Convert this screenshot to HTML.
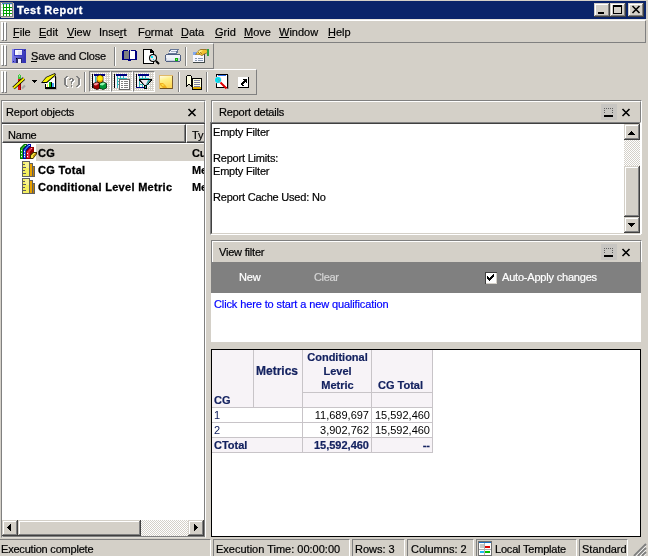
<!DOCTYPE html>
<html><head><meta charset="utf-8">
<style>
*{margin:0;padding:0;box-sizing:border-box}
html,body{width:648px;height:556px;overflow:hidden;background:#D4D0C8;font-family:"Liberation Sans",sans-serif;font-size:11px;color:#000}
body{position:relative}
.a{position:absolute}
.t{position:absolute;white-space:nowrap;line-height:12px;letter-spacing:-0.2px;will-change:transform;-webkit-text-stroke:0.2px currentColor}
.ls0{letter-spacing:0}
.ns{-webkit-text-stroke:0}
.lsb{letter-spacing:0.3px;-webkit-text-stroke:0.3px #000}
.b{font-weight:bold}
.u{position:absolute;height:1px;background:#000}
.grip{position:absolute;width:3px;border-left:1px solid #fff;border-top:1px solid #fff;border-right:1px solid #808080;border-bottom:1px solid #808080;background:#fff}
.grip::after{content:"";position:absolute;left:0;top:0;right:0;bottom:0;}
.sep{position:absolute;width:2px;border-left:1px solid #808080;border-right:1px solid #fff}
.btn3d{position:absolute;background:#D4D0C8;box-shadow:inset -1px -1px #404040,inset 1px 1px #D4D0C8,inset -2px -2px #808080,inset 2px 2px #fff}
.etch{position:absolute;border-top:1px solid #808080;border-left:1px solid #808080;border-right:1px solid #fff;border-bottom:1px solid #fff}
.etch>div{position:absolute;left:0;top:0;right:0;bottom:0;border-top:1px solid #fff;border-left:1px solid #fff;border-right:1px solid #808080;border-bottom:1px solid #808080}
.dith{background:repeating-conic-gradient(#fff 0 25%,#D4D0C8 0 50%) 0 0/2px 2px}
.dots{background:linear-gradient(90deg,transparent 1px,#D4D0C8 1px) 1px 1px/2px 2px,linear-gradient(transparent 1px,#D4D0C8 1px) 1px 1px/2px 2px,#fff}
.pressed{position:absolute;border-top:1px solid #808080;border-left:1px solid #808080;border-right:1px solid #fff;border-bottom:1px solid #fff}
.pane{position:absolute;top:539px;height:17px;border-top:1px solid #808080;border-left:1px solid #808080;border-right:1px solid #fff}
svg{position:absolute;overflow:visible}
.gc{position:absolute;background:#F7F3F7;border-right:1px solid #C8C4C8;border-bottom:1px solid #C8C4C8}
.gw{position:absolute;background:#fff;border-right:1px solid #C8C4C8;border-bottom:1px solid #C8C4C8}
.nv{color:#142260}
</style></head><body>
<!-- ============ title bar ============ -->
<div class="a" style="left:0;top:1px;width:646px;height:18px;background:#0A246A"></div>
<svg style="left:0;top:0" width="14" height="18" viewBox="0 0 14 18" shape-rendering="crispEdges"><rect x="13" y="3" width="1" height="15" fill="#C8C4BC"/><rect x="1" y="17" width="13" height="1" fill="#C8C4BC"/><rect x="0" y="2" width="13" height="15" fill="#808080"/><rect x="1" y="3" width="11" height="13" fill="#D8D8E0"/><rect x="2" y="3" width="10" height="1" fill="#3A7EC0"/><rect x="1" y="3" width="1" height="1" fill="#fff"/><rect x="1" y="5" width="2" height="2" fill="#fff"/><rect x="1" y="8" width="2" height="2" fill="#fff"/><rect x="1" y="11" width="2" height="2" fill="#fff"/><rect x="1" y="14" width="2" height="2" fill="#fff"/><rect x="4" y="5" width="2" height="2" fill="#fff"/><rect x="4" y="8" width="2" height="2" fill="#fff"/><rect x="4" y="11" width="2" height="2" fill="#fff"/><rect x="4" y="14" width="2" height="2" fill="#fff"/><rect x="7" y="5" width="2" height="2" fill="#fff"/><rect x="7" y="8" width="2" height="2" fill="#fff"/><rect x="7" y="11" width="2" height="2" fill="#fff"/><rect x="7" y="14" width="2" height="2" fill="#fff"/><rect x="10" y="5" width="2" height="2" fill="#fff"/><rect x="10" y="8" width="2" height="2" fill="#fff"/><rect x="10" y="11" width="2" height="2" fill="#fff"/><rect x="10" y="14" width="2" height="2" fill="#fff"/><rect x="3" y="4" width="1" height="12" fill="#00A000"/><rect x="6" y="4" width="1" height="12" fill="#00A000"/><rect x="9" y="4" width="1" height="12" fill="#00A000"/><rect x="3" y="7" width="9" height="1" fill="#00A000"/><rect x="3" y="10" width="9" height="1" fill="#00A000"/><rect x="3" y="13" width="9" height="1" fill="#00A000"/></svg>
<div class="t b" style="left:17px;top:4px;color:#fff;letter-spacing:0.5px;-webkit-text-stroke:0.3px #fff">Test Report</div>
<div class="btn3d" style="left:594px;top:3px;width:16px;height:14px"></div>
<div class="a" style="left:598px;top:12px;width:6px;height:2px;background:#000"></div>
<div class="btn3d" style="left:610px;top:3px;width:16px;height:14px"></div>
<div class="a" style="left:613px;top:5px;width:9px;height:9px;border:1px solid #000;border-top-width:2px"></div>
<div class="btn3d" style="left:628px;top:3px;width:16px;height:14px"></div>
<svg style="left:632px;top:6px" width="8" height="7" viewBox="0 0 8 7"><path d="M0.5 0 L7.5 7 M7.5 0 L0.5 7" stroke="#000" stroke-width="1.6"/></svg>
<div class="a" style="left:0;top:19px;width:648px;height:1px;background:#E8E6E0"></div>
<div class="a" style="left:0;top:20px;width:645px;height:1px;background:#fff"></div>

<!-- ============ menu bar ============ -->
<div class="a" style="left:0;top:21px;width:646px;height:22px;border-right:1px solid #808080;border-bottom:1px solid #808080"></div>
<div class="grip" style="left:1px;top:22px;height:19px"></div>
<div class="grip" style="left:4px;top:22px;height:19px"></div>
<div class="t ls0" style="left:13px;top:26px">File</div><div class="u" style="left:13px;top:37px;width:6px"></div>
<div class="t ls0" style="left:39px;top:26px">Edit</div><div class="u" style="left:39px;top:37px;width:7px"></div>
<div class="t ls0" style="left:67px;top:26px">View</div><div class="u" style="left:67px;top:37px;width:7px"></div>
<div class="t ls0" style="left:99px;top:26px">Insert</div><div class="u" style="left:119px;top:37px;width:4px"></div>
<div class="t ls0" style="left:138px;top:26px">Format</div><div class="u" style="left:145px;top:37px;width:6px"></div>
<div class="t ls0" style="left:181px;top:26px">Data</div><div class="u" style="left:181px;top:37px;width:7px"></div>
<div class="t ls0" style="left:215px;top:26px">Grid</div><div class="u" style="left:215px;top:37px;width:7px"></div>
<div class="t ls0" style="left:244px;top:26px">Move</div><div class="u" style="left:244px;top:37px;width:9px"></div>
<div class="t ls0" style="left:279px;top:26px">Window</div><div class="u" style="left:279px;top:37px;width:10px"></div>
<div class="t ls0" style="left:328px;top:26px">Help</div><div class="u" style="left:328px;top:37px;width:7px"></div>

<!-- ============ toolbar 1 ============ -->
<div class="a" style="left:0;top:43px;width:214px;height:26px;border-top:1px solid #fff;border-right:1px solid #808080;border-bottom:1px solid #808080"></div>
<div class="grip" style="left:1px;top:45px;height:21px"></div>
<div class="grip" style="left:4px;top:45px;height:21px"></div>
<!-- floppy -->
<svg style="left:12px;top:49px" width="14" height="14" viewBox="0 0 14 14" shape-rendering="crispEdges">
  <defs><linearGradient id="fl" x1="0" y1="0" x2="1" y2="0.3"><stop offset="0" stop-color="#8C8CF4"/><stop offset="1" stop-color="#3434B4"/></linearGradient></defs>
  <rect x="0" y="0" width="14" height="14" fill="url(#fl)"/>
  <rect x="2" y="0" width="9" height="7" fill="#3C3CC0"/>
  <rect x="3" y="1" width="7" height="5" fill="#F8F8FF"/>
  <rect x="6" y="2" width="4" height="4" fill="#E0E0F4"/>
  <rect x="12" y="1" width="1" height="1" fill="#202060"/>
  <rect x="4" y="9" width="6" height="5" fill="#2A2A70"/>
  <rect x="6" y="10" width="3" height="4" fill="#F0F0FF"/>
  <rect x="4" y="9" width="1" height="1" fill="#000"/>
  <rect x="1" y="12" width="1" height="1" fill="#202080"/>
</svg>
<div class="t" style="left:31px;top:50px">Save and Close</div><div class="u" style="left:31px;top:61px;width:6px"></div>
<div class="sep" style="left:114px;top:47px;height:19px"></div>
<!-- book -->
<svg style="left:122px;top:50px" width="15" height="12" viewBox="0 0 15 12" shape-rendering="crispEdges">
  <path d="M1 0H6V1H7V0H8V1H9V0H14V1H15V10H9V11H6V10H0V1H1Z" fill="#000080"/>
  <rect x="2" y="1" width="5" height="8" fill="#808080"/>
  <rect x="8" y="1" width="5" height="8" fill="#fff"/>
  <rect x="7" y="1" width="1" height="9" fill="#000080"/>
</svg>
<!-- print preview -->
<svg style="left:143px;top:49px" width="17" height="16" viewBox="0 0 17 16" shape-rendering="crispEdges">
  <path d="M0 0H8L11 3V15H0Z" fill="#000"/>
  <path d="M1 1H7V4H10V14H1Z" fill="#fff"/>
  <circle cx="10" cy="9" r="4" fill="#000" shape-rendering="auto"/>
  <circle cx="10" cy="9" r="3" fill="#E8E8E8" shape-rendering="auto"/>
  <rect x="8" y="7" width="2" height="2" fill="#00E8F8"/>
  <rect x="10" y="10" width="1" height="1" fill="#00E8F8"/>
  <path d="M13 12L16 15" stroke="#000" stroke-width="2" shape-rendering="auto"/>
</svg>
<!-- printer -->
<svg style="left:165px;top:49px" width="16" height="14" viewBox="0 0 16 14" shape-rendering="crispEdges">
  <path d="M5 0H14L12 5H3Z" fill="#687898"/>
  <path d="M6 1H12L11 4H4Z" fill="#F4F4FC"/>
  <rect x="6" y="2" width="5" height="1" fill="#A8B0C8"/>
  <path d="M1 5H15V6H16V12H15V13H1V12H0V6H1Z" fill="#4E5E80"/>
  <rect x="1" y="6" width="14" height="3" fill="#F0F2F8"/>
  <rect x="1" y="9" width="14" height="3" fill="#C8D0E0"/>
  <rect x="2" y="9" width="8" height="2" fill="#E8ECF4"/>
  <rect x="10" y="9" width="3" height="3" fill="#10B010"/>
  <rect x="11" y="10" width="1" height="1" fill="#80F080"/>
</svg>
<div class="sep" style="left:185px;top:47px;height:19px"></div>
<!-- form/hand -->
<svg style="left:190px;top:46px" width="22" height="20" viewBox="0 0 22 20" shape-rendering="crispEdges">
  <rect x="3" y="6" width="12" height="11" fill="#404848"/>
  <rect x="3" y="6" width="11" height="10" fill="#F8F8FF"/>
  <rect x="3" y="6" width="4" height="3" fill="#80A8F0"/>
  <rect x="5" y="12" width="2" height="1" fill="#8898B0"/><rect x="8" y="12" width="5" height="1" fill="#8898B0"/>
  <rect x="5" y="14" width="2" height="1" fill="#8898B0"/><rect x="8" y="14" width="5" height="1" fill="#8898B0"/>
  <path d="M5 8.5 L9 4 L11 3 H16 L17.5 4 V7 L14 8.5 L12 10 L10 9 Z" fill="#806020" shape-rendering="auto"/>
  <path d="M5.8 8.3 L9.3 4.5 L11 3.7 H15.8 L17 4.5 V6.5 L13.5 8 L11.8 9.2 L10 8.4 Z" fill="#F0C030" shape-rendering="auto"/>
  <path d="M7 7 L9.5 4.5 L13 4 L10 7 Z" fill="#FFF080" shape-rendering="auto"/>
  <rect x="8" y="6" width="1" height="1" fill="#A08030"/><rect x="10" y="6" width="1" height="1" fill="#A08030"/><rect x="9" y="7" width="1" height="1" fill="#A08030"/><rect x="11" y="7" width="1" height="1" fill="#A08030"/>
  <rect x="17" y="3" width="2" height="7" fill="#30A040"/>
</svg>

<!-- ============ toolbar 2 ============ -->
<div class="a" style="left:0;top:69px;width:257px;height:26px;border-top:1px solid #fff;border-right:1px solid #808080;border-bottom:1px solid #808080"></div>
<div class="grip" style="left:1px;top:71px;height:22px"></div>
<div class="grip" style="left:4px;top:71px;height:22px"></div>
<!-- pencil/candle -->
<svg style="left:12px;top:74px" width="14" height="16" viewBox="0 0 14 16" shape-rendering="crispEdges">
  <path d="M10 14.5 L13 11.5" stroke="#A8A8A8" stroke-width="2.2" shape-rendering="auto"/>
  <rect x="7" y="0" width="1" height="1" fill="#50D050"/>
  <rect x="6" y="1" width="3" height="4" fill="#40C040"/>
  <rect x="7" y="1" width="1" height="2" fill="#A0F0A0"/>
  <rect x="6" y="5" width="3" height="11" fill="#E01010"/>
  <rect x="8" y="5" width="1" height="11" fill="#A00000"/>
  <path d="M1.5 14 L12 4.5" stroke="#000" stroke-width="3.4" shape-rendering="auto"/>
  <path d="M1.5 14 L12 4.5" stroke="#F8F000" stroke-width="1.8" shape-rendering="auto"/>
</svg>
<svg style="left:32px;top:80px" width="5" height="3" viewBox="0 0 5 3" shape-rendering="crispEdges"><path d="M0 0H5V1H4V2H3V3H2V2H1V1H0Z" fill="#000"/></svg>
<!-- chart with lightning -->
<svg style="left:39px;top:71px" width="20" height="20" viewBox="0 0 20 20" shape-rendering="crispEdges">
  <rect x="6" y="7" width="11" height="11" fill="#fff"/>
  <rect x="16" y="5" width="1" height="13" fill="#000"/>
  <rect x="6" y="16" width="11" height="2" fill="#000"/>
  <rect x="17" y="6" width="1" height="13" fill="#B0ACA4"/>
  <rect x="7" y="18" width="11" height="1" fill="#B0ACA4"/>
  <rect x="6" y="13" width="1" height="3" fill="#000"/>
  <rect x="8" y="13" width="1" height="3" fill="#F0F040"/>
  <rect x="10" y="11" width="2" height="5" fill="#00C000"/>
  <rect x="12" y="11" width="1" height="5" fill="#000"/>
  <rect x="13" y="12" width="2" height="4" fill="#40A8F8"/>
  <path d="M2 12 L7 6 L16 2 L17 4 L8 12 Z" fill="#000" shape-rendering="auto"/>
  <path d="M3.5 11 L7.5 6.5 L15.5 3 L15.8 4 L7.5 11 Z" fill="#F8F400" shape-rendering="auto"/>
</svg>
<!-- (?) disabled -->
<svg style="left:63px;top:75px" width="19" height="14" viewBox="0 0 19 14" shape-rendering="crispEdges"><rect x="4" y="2" width="2" height="1" fill="#fff"/><rect x="3" y="3" width="2" height="1" fill="#fff"/><rect x="2" y="4" width="2" height="7" fill="#fff"/><rect x="3" y="11" width="2" height="1" fill="#fff"/><rect x="4" y="12" width="2" height="1" fill="#fff"/><rect x="14" y="2" width="2" height="1" fill="#fff"/><rect x="15" y="3" width="2" height="1" fill="#fff"/><rect x="16" y="4" width="2" height="7" fill="#fff"/><rect x="15" y="11" width="2" height="1" fill="#fff"/><rect x="14" y="12" width="2" height="1" fill="#fff"/><rect x="8" y="4" width="3" height="1" fill="#fff"/><rect x="7" y="5" width="2" height="1" fill="#fff"/><rect x="10" y="5" width="2" height="2" fill="#fff"/><rect x="9" y="7" width="2" height="1" fill="#fff"/><rect x="9" y="8" width="1" height="2" fill="#fff"/><rect x="9" y="11" width="1" height="2" fill="#fff"/><rect x="3" y="1" width="2" height="1" fill="#808080"/><rect x="2" y="2" width="2" height="1" fill="#808080"/><rect x="1" y="3" width="2" height="7" fill="#808080"/><rect x="2" y="10" width="2" height="1" fill="#808080"/><rect x="3" y="11" width="2" height="1" fill="#808080"/><rect x="13" y="1" width="2" height="1" fill="#808080"/><rect x="14" y="2" width="2" height="1" fill="#808080"/><rect x="15" y="3" width="2" height="7" fill="#808080"/><rect x="14" y="10" width="2" height="1" fill="#808080"/><rect x="13" y="11" width="2" height="1" fill="#808080"/><rect x="7" y="3" width="3" height="1" fill="#808080"/><rect x="6" y="4" width="2" height="1" fill="#808080"/><rect x="9" y="4" width="2" height="2" fill="#808080"/><rect x="8" y="6" width="2" height="1" fill="#808080"/><rect x="8" y="7" width="1" height="2" fill="#808080"/><rect x="8" y="10" width="1" height="2" fill="#808080"/></svg>
<div class="sep" style="left:84px;top:72px;height:20px"></div>
<!-- pressed buttons -->
<div class="pressed dots" style="left:89px;top:71px;width:22px;height:21px"></div>
<div class="pressed dots" style="left:111px;top:71px;width:22px;height:21px"></div>
<div class="pressed dots" style="left:133px;top:71px;width:22px;height:21px"></div>
<!-- cubes -->
<svg style="left:88px;top:70px" width="22" height="22" viewBox="0 0 22 22">
  <rect x="4" y="4" width="1" height="14" fill="#000"/>
  <rect x="6" y="4" width="11" height="2" fill="#000080"/>
  <rect x="5" y="6" width="12" height="11" fill="#F4F0F8"/>
  <rect x="7" y="6" width="1" height="11" fill="#30B8B8"/>
  <rect x="14" y="6" width="1" height="11" fill="#30B8B8"/>
  <path d="M9 6.5 L12 5 L15 6.5 V12 L12 13.5 L9 12 Z" fill="#E89000" stroke="#303000" stroke-width="0.8"/>
  <path d="M9.4 6.8 L12 5.5 L14.6 6.8 V10 L12 11 L9.4 10 Z" fill="#FFE800"/>
  <path d="M5.5 13.5 L9 12 L12.5 13.5 V18 L9 19.5 L5.5 18 Z" fill="#A00000" stroke="#200000" stroke-width="0.8"/>
  <path d="M6 13.8 L9 12.5 L11 13.5 L8 15.5 L6 15 Z" fill="#F89098"/>
  <path d="M11.5 13.5 L15 12 L18.5 13.5 V18 L15 19.5 L11.5 18 Z" fill="#009838" stroke="#002000" stroke-width="0.8"/>
  <path d="M12 13.8 L15 12.5 L17.5 13.5 L14.5 15.5 L12 15 Z" fill="#90F8B0"/>
</svg>
<!-- grid + doc -->
<svg style="left:110px;top:70px" width="22" height="22" viewBox="0 0 22 22" shape-rendering="crispEdges">
  <rect x="4" y="4" width="1" height="14" fill="#000"/>
  <rect x="6" y="4" width="11" height="2" fill="#000080"/>
  <rect x="5" y="6" width="12" height="12" fill="#F4F0F8"/>
  <rect x="7" y="6" width="1" height="12" fill="#30B8B8"/>
  <rect x="10" y="6" width="1" height="12" fill="#30B8B8"/>
  <rect x="13" y="6" width="1" height="12" fill="#30B8B8"/>
  <rect x="8" y="8" width="9" height="1" fill="#30B8B8"/>
  <rect x="8" y="11" width="9" height="1" fill="#30B8B8"/>
  <rect x="8" y="14" width="9" height="1" fill="#30B8B8"/>
  <rect x="9" y="9" width="11" height="11" fill="#686868"/>
  <rect x="10" y="10" width="9" height="9" fill="#fff"/>
  <rect x="11" y="11" width="2" height="1" fill="#808080"/><rect x="14" y="11" width="4" height="1" fill="#808080"/>
  <rect x="11" y="13" width="2" height="1" fill="#808080"/><rect x="14" y="13" width="4" height="1" fill="#808080"/>
  <rect x="11" y="15" width="2" height="1" fill="#808080"/><rect x="14" y="15" width="4" height="1" fill="#808080"/>
  <rect x="11" y="17" width="2" height="1" fill="#808080"/><rect x="14" y="17" width="4" height="1" fill="#808080"/>
</svg>
<!-- grid + funnel -->
<svg style="left:132px;top:70px" width="22" height="22" viewBox="0 0 22 22" shape-rendering="crispEdges">
  <rect x="4" y="4" width="1" height="14" fill="#000"/>
  <rect x="6" y="4" width="11" height="2" fill="#000080"/>
  <rect x="5" y="6" width="12" height="11" fill="#F4F0F8"/>
  <rect x="7" y="6" width="1" height="11" fill="#30B8B8"/>
  <rect x="10" y="6" width="1" height="11" fill="#30B8B8"/>
  <rect x="13" y="6" width="1" height="11" fill="#30B8B8"/>
  <rect x="8" y="8" width="9" height="1" fill="#30B8B8"/>
  <rect x="8" y="11" width="9" height="1" fill="#30B8B8"/>
  <rect x="8" y="14" width="9" height="1" fill="#30B8B8"/>
  <rect x="4" y="17" width="8" height="1" fill="#000080"/>
  <path d="M7 9H20V10L15 16V19H12V16L7 10Z" fill="#000"/>
  <path d="M8.5 10H18.5L14.5 15H12.5Z" fill="#F0E8F0" shape-rendering="auto"/>
  <path d="M16 10H18.5L14.5 15H13.8Z" fill="#30A8A8" shape-rendering="auto"/>
  <rect x="13" y="16" width="1" height="2" fill="#30B0B0"/>
</svg>
<!-- sticky note -->
<svg style="left:159px;top:75px" width="14" height="14" viewBox="0 0 14 14" shape-rendering="crispEdges">
  <defs><linearGradient id="gy" x1="0" y1="0" x2="0.3" y2="1"><stop offset="0" stop-color="#FFFCE8"/><stop offset="0.4" stop-color="#FFF088"/><stop offset="1" stop-color="#FFD858"/></linearGradient></defs>
  <rect x="0" y="0" width="14" height="14" fill="#E0B868"/>
  <rect x="1" y="13" width="13" height="1" fill="#705020"/>
  <rect x="13" y="1" width="1" height="13" fill="#806030"/>
  <rect x="1" y="1" width="12" height="12" fill="url(#gy)"/>
  <path d="M1 8 L4 8 L7 11 L8 13 L4 13 L1 10 Z" fill="#F0B020" shape-rendering="auto"/>
  <path d="M2 9 L4 9 L5.5 10.5 L3.5 11 Z" fill="#FFE040" shape-rendering="auto"/>
</svg>
<div class="sep" style="left:178px;top:72px;height:20px"></div>
<!-- doc-book -->
<svg style="left:186px;top:75px" width="16" height="15" viewBox="0 0 16 15" shape-rendering="crispEdges">
  <path d="M1 0H5V1H6V12H5V11H4V10H2V11H1V12H0V1H1Z" fill="#000"/>
  <path d="M1 1H5V10H4V9H2V10H1Z" fill="#FFFFE0"/>
  <rect x="6" y="3" width="10" height="12" fill="#000"/>
  <rect x="7" y="4" width="8" height="10" fill="#FFFFE0"/>
  <rect x="8" y="5" width="6" height="1" fill="#8080A0"/>
  <rect x="8" y="7" width="6" height="1" fill="#8080A0"/>
  <rect x="8" y="9" width="6" height="1" fill="#8080A0"/>
  <rect x="8" y="11" width="6" height="1" fill="#8080A0"/>
  <rect x="7" y="12" width="8" height="2" fill="#D8A800"/>
</svg>
<div class="sep" style="left:206px;top:72px;height:20px"></div>
<!-- doc + magnifier red -->
<svg style="left:214px;top:74px" width="15" height="16" viewBox="0 0 15 16" shape-rendering="crispEdges">
  <rect x="2" y="0" width="12" height="14" fill="#000"/>
  <rect x="3" y="1" width="10" height="12" fill="#fff"/>
  <rect x="4" y="1" width="8" height="1" fill="#3070F0"/>
  <rect x="14" y="1" width="1" height="14" fill="#A0A0A0"/>
  <circle cx="4" cy="6" r="3.6" fill="#F0D0E0" shape-rendering="auto"/>
  <circle cx="4" cy="6" r="3" fill="#00E0F0" shape-rendering="auto"/>
  <rect x="4" y="5" width="1" height="1" fill="#60A0B0"/><rect x="5" y="6" width="1" height="1" fill="#60A0B0"/><rect x="4" y="7" width="1" height="1" fill="#60A0B0"/>
  <path d="M6.5 8.5 L12.5 14.5" stroke="#E00000" stroke-width="2" shape-rendering="auto"/>
  <rect x="13" y="14" width="1" height="1" fill="#606060"/>
</svg>
<!-- shortcut -->
<svg style="left:238px;top:77px" width="12" height="12" viewBox="0 0 12 12" shape-rendering="crispEdges">
  <rect x="0" y="0" width="11" height="11" fill="#000"/>
  <rect x="0" y="0" width="10" height="10" fill="#fff"/>
  <path d="M4 5H5V4H6V3H5V2H9V6H8V5H7V6H6V7H5V8H6V9H4V8H3V6H4Z" fill="#000"/>
</svg>

<!-- ============ left panel ============ -->
<div class="etch" style="left:1px;top:100px;width:205px;height:438px;border-bottom-color:#E2E0DA"><div></div></div>
<div class="t" style="left:6px;top:106px">Report objects</div>
<svg style="left:188px;top:109px" width="8" height="7" viewBox="0 0 8 7"><path d="M0.5 0 L7.5 7 M7.5 0 L0.5 7" stroke="#000" stroke-width="1.6"/></svg>
<div class="a" style="left:2px;top:122px;width:203px;height:1px;background:#808080"></div>
<div class="a" style="left:2px;top:123px;width:203px;height:1px;background:#404040"></div>
<div class="a" style="left:2px;top:124px;width:202px;height:411px;background:#fff"></div>
<!-- column header -->
<div class="a" style="left:2px;top:124px;width:184px;height:19px;background:#D4D0C8;border-top:1px solid #fff;border-left:1px solid #fff;border-right:1px solid #404040;border-bottom:1px solid #404040;box-shadow:inset -1px -1px #808080"></div>
<div class="a" style="left:186px;top:124px;width:18px;height:19px;background:#D4D0C8;border-top:1px solid #fff;border-left:1px solid #fff;border-bottom:1px solid #404040;box-shadow:inset 0 -1px #808080"></div>
<div class="t" style="left:8px;top:129px">Name</div>
<div class="t" style="left:192px;top:129px;width:12px;overflow:hidden">Ty</div>
<!-- rows -->
<div class="a" style="left:36px;top:144px;width:168px;height:17px;background:#D4D0C8"></div>
<svg style="left:18px;top:142px" width="20" height="19" viewBox="0 0 20 19">
  <path d="M2 6 L6 2 H9 L9 4 L5 8 V17 H2 Z" fill="#007000"/>
  <path d="M3 7 L6.5 3 H8 L4.5 7 V16 H3 Z" fill="#30C030"/>
  <path d="M5 7 L10 2 H13 V6 L8 11 V17 H5 Z" fill="#0000A0"/>
  <path d="M6 8 L10.5 3 H12 L7.5 8 V16 H6 Z" fill="#4090F8"/>
  <path d="M8 9 L12 5 H16 V12 L12 17 H8 Z" fill="#900000"/>
  <path d="M9 10 L12.5 6 H15 L11.5 10 V16 H9 Z" fill="#F02848"/>
  <path d="M12 13 L15 10 H19 V12 L15 17 H12 Z" fill="#403000"/>
  <path d="M13 13.5 L15.5 11 H18 L15 14 V16 H13 Z" fill="#F8E040"/>
  <path d="M15 14 L18 11 V12 L15 16 Z" fill="#D0A000"/>
  <rect x="3" y="8" width="1" height="1" fill="#fff"/><rect x="3" y="11" width="1" height="1" fill="#fff"/><rect x="3" y="14" width="1" height="1" fill="#fff"/>
  <rect x="6" y="9" width="1" height="1" fill="#fff"/><rect x="6" y="12" width="1" height="1" fill="#fff"/><rect x="6" y="14" width="1" height="1" fill="#fff"/>
  <rect x="9" y="11" width="1" height="1" fill="#fff"/><rect x="9" y="14" width="1" height="1" fill="#fff"/>
  <rect x="7" y="3" width="1" height="1" fill="#A0F0A0"/><rect x="11" y="3" width="1" height="1" fill="#A0D0FF"/><rect x="13" y="6" width="1" height="1" fill="#FFA0B0"/>
</svg>
<div class="t b lsb" style="left:38px;top:147px">CG</div>
<div class="t b" style="left:192px;top:147px;width:12px;overflow:hidden">Cu</div>
<svg style="left:22px;top:161px" width="13" height="16" viewBox="0 0 13 16" shape-rendering="crispEdges">
  <rect x="0" y="0" width="8" height="16" fill="#606060"/>
  <rect x="1" y="1" width="6" height="14" fill="#F4F060"/>
  <rect x="3" y="1" width="4" height="6" fill="#F8F490"/>
  <rect x="1" y="3" width="2" height="1" fill="#606060"/><rect x="1" y="6" width="3" height="1" fill="#606060"/><rect x="1" y="9" width="2" height="1" fill="#606060"/><rect x="1" y="12" width="3" height="1" fill="#606060"/>
  <rect x="7" y="2" width="4" height="14" fill="#606060"/>
  <rect x="8" y="3" width="2" height="12" fill="#E8A000"/>
  <rect x="10" y="5" width="3" height="11" fill="#606060"/>
  <rect x="11" y="6" width="1" height="9" fill="#C08000"/>
</svg>
<div class="t b lsb" style="left:38px;top:164px">CG Total</div>
<div class="t b" style="left:192px;top:164px;width:12px;overflow:hidden">Me</div>
<svg style="left:22px;top:178px" width="13" height="16" viewBox="0 0 13 16" shape-rendering="crispEdges">
  <rect x="0" y="0" width="8" height="16" fill="#606060"/>
  <rect x="1" y="1" width="6" height="14" fill="#F4F060"/>
  <rect x="3" y="1" width="4" height="6" fill="#F8F490"/>
  <rect x="1" y="3" width="2" height="1" fill="#606060"/><rect x="1" y="6" width="3" height="1" fill="#606060"/><rect x="1" y="9" width="2" height="1" fill="#606060"/><rect x="1" y="12" width="3" height="1" fill="#606060"/>
  <rect x="7" y="2" width="4" height="14" fill="#606060"/>
  <rect x="8" y="3" width="2" height="12" fill="#E8A000"/>
  <rect x="10" y="5" width="3" height="11" fill="#606060"/>
  <rect x="11" y="6" width="1" height="9" fill="#C08000"/>
</svg>
<div class="t b lsb" style="left:38px;top:181px">Conditional Level Metric</div>
<div class="t b" style="left:192px;top:181px;width:12px;overflow:hidden">Me</div>
<!-- h scrollbar -->
<div class="a dith" style="left:2px;top:520px;width:202px;height:16px"></div>
<div class="btn3d" style="left:2px;top:520px;width:16px;height:16px"></div>
<svg style="left:7px;top:524px" width="4" height="7" viewBox="0 0 4 7" shape-rendering="crispEdges"><path d="M3 0H4V7H3V6H2V5H1V4H0V3H1V2H2V1H3Z" fill="#000"/></svg>
<div class="btn3d" style="left:18px;top:520px;width:123px;height:16px"></div>
<div class="btn3d" style="left:188px;top:520px;width:16px;height:16px"></div>
<svg style="left:194px;top:524px" width="4" height="7" viewBox="0 0 4 7" shape-rendering="crispEdges"><path d="M0 0H1V1H2V2H3V3H4V4H3V5H2V6H1V7H0Z" fill="#000"/></svg>

<!-- ============ report details ============ -->
<div class="etch" style="left:211px;top:100px;width:431px;height:134px"><div></div></div>
<div class="t" style="left:219px;top:106px">Report details</div>
<div class="a" style="left:601px;top:104px;width:16px;height:16px;background:#C8C6C2"></div>
<svg style="left:604px;top:108px" width="9" height="9" viewBox="0 0 9 9" shape-rendering="crispEdges">
  <path d="M0 0H1V1H0ZM2 0H3V1H2ZM4 0H5V1H4ZM6 0H7V1H6ZM8 0H9V1H8ZM0 2H1V3H0ZM8 2H9V3H8ZM0 4H1V5H0ZM8 4H9V5H8Z" fill="#606060"/>
  <rect x="0" y="7" width="9" height="2" fill="#000"/>
</svg>
<svg style="left:622px;top:109px" width="8" height="7" viewBox="0 0 8 7"><path d="M0.5 0 L7.5 7 M7.5 0 L0.5 7" stroke="#000" stroke-width="1.6"/></svg>
<div class="a" style="left:210px;top:122px;width:431px;height:113px;border-top:1px solid #808080;border-left:1px solid #808080;border-right:1px solid #fff;border-bottom:1px solid #fff"></div>
<div class="a" style="left:211px;top:123px;width:429px;height:111px;background:#fff;border-top:1px solid #404040;border-left:1px solid #404040;border-right:1px solid #D4D0C8;border-bottom:1px solid #D4D0C8"></div>
<div class="t" style="left:213px;top:126px">Empty Filter</div>
<div class="t" style="left:213px;top:152px">Report Limits:</div>
<div class="t" style="left:213px;top:165px">Empty Filter</div>
<div class="t" style="left:213px;top:191px">Report Cache Used: No</div>
<!-- v scrollbar -->
<div class="a dith" style="left:624px;top:124px;width:16px;height:109px"></div>
<div class="btn3d" style="left:624px;top:124px;width:16px;height:16px"></div>
<svg style="left:628px;top:131px" width="7" height="4" viewBox="0 0 7 4" shape-rendering="crispEdges"><path d="M3 0H4V1H5V2H6V3H7V4H0V3H1V2H2V1H3Z" fill="#000"/></svg>
<div class="btn3d" style="left:624px;top:166px;width:16px;height:51px"></div>
<div class="btn3d" style="left:624px;top:217px;width:16px;height:16px"></div>
<svg style="left:628px;top:223px" width="7" height="4" viewBox="0 0 7 4" shape-rendering="crispEdges"><path d="M0 0H7V1H6V2H5V3H4V4H3V3H2V2H1V1H0Z" fill="#000"/></svg>

<!-- ============ view filter ============ -->
<div class="etch" style="left:211px;top:240px;width:431px;height:102px"><div></div></div>
<div class="t" style="left:219px;top:246px">View filter</div>
<div class="a" style="left:601px;top:244px;width:16px;height:16px;background:#C8C6C2"></div>
<svg style="left:604px;top:248px" width="9" height="9" viewBox="0 0 9 9" shape-rendering="crispEdges">
  <path d="M0 0H1V1H0ZM2 0H3V1H2ZM4 0H5V1H4ZM6 0H7V1H6ZM8 0H9V1H8ZM0 2H1V3H0ZM8 2H9V3H8ZM0 4H1V5H0ZM8 4H9V5H8Z" fill="#606060"/>
  <rect x="0" y="7" width="9" height="2" fill="#000"/>
</svg>
<svg style="left:622px;top:249px" width="8" height="7" viewBox="0 0 8 7"><path d="M0.5 0 L7.5 7 M7.5 0 L0.5 7" stroke="#000" stroke-width="1.6"/></svg>
<div class="a" style="left:211px;top:262px;width:430px;height:31px;background:#808080"></div>
<div class="t" style="left:239px;top:271px;color:#fff">New</div>
<div class="t" style="left:314px;top:271px;color:#D4D4D4;letter-spacing:-0.35px">Clear</div>
<div class="a" style="left:484px;top:271px;width:13px;height:13px;background:#fff;border-top:1px solid #808080;border-left:1px solid #808080;box-shadow:inset 1px 1px #404040,inset -1px -1px #D4D0C8"></div>
<svg style="left:487px;top:274px" width="7" height="7" viewBox="0 0 7 7" shape-rendering="crispEdges"><path d="M6 0H7V3H6V4H5V5H4V6H3V7H2V6H1V5H0V2H1V3H2V4H3V3H4V2H5V1H6Z" fill="#000"/></svg>
<div class="t" style="left:502px;top:271px;color:#fff">Auto-Apply changes</div>
<div class="a" style="left:211px;top:293px;width:430px;height:49px;background:#fff"></div>
<div class="a" style="left:641px;top:262px;width:1px;height:80px;background:#D4D0C8"></div>
<div class="t" style="left:214px;top:298px;color:#0000FF;letter-spacing:-0.12px">Click here to start a new qualification</div>

<!-- ============ grid panel ============ -->
<div class="a" style="left:211px;top:349px;width:430px;height:188px;background:#fff;border:1px solid #000"></div>
<!-- header cells -->
<div class="gc" style="left:212px;top:350px;width:42px;height:58px"></div>
<div class="gc" style="left:254px;top:350px;width:49px;height:58px"></div>
<div class="gc" style="left:303px;top:350px;width:69px;height:43px"></div>
<div class="gc" style="left:372px;top:350px;width:61px;height:43px"></div>
<div class="gc" style="left:303px;top:393px;width:69px;height:15px"></div>
<div class="gc" style="left:372px;top:393px;width:61px;height:15px"></div>
<div class="gw" style="left:212px;top:408px;width:91px;height:15px"></div>
<div class="gw" style="left:303px;top:408px;width:69px;height:15px"></div>
<div class="gw" style="left:372px;top:408px;width:61px;height:15px"></div>
<div class="gw" style="left:212px;top:423px;width:91px;height:15px"></div>
<div class="gw" style="left:303px;top:423px;width:69px;height:15px"></div>
<div class="gw" style="left:372px;top:423px;width:61px;height:15px"></div>
<div class="gc" style="left:212px;top:438px;width:91px;height:15px"></div>
<div class="gc" style="left:303px;top:438px;width:69px;height:15px"></div>
<div class="gc" style="left:372px;top:438px;width:61px;height:15px"></div>
<div class="t b nv ls0" style="left:256px;top:364px;font-size:12px;line-height:14px">Metrics</div>
<div class="t b nv ls0" style="left:303px;top:350px;width:69px;text-align:center;line-height:14px;white-space:normal">Conditional<br>Level<br>Metric</div>
<div class="t b nv ls0" style="left:378px;top:379px">CG Total</div>
<div class="t b nv ls0" style="left:214px;top:394px">CG</div>
<div class="t nv ls0 ns" style="left:214px;top:409px">1</div>
<div class="t ls0 ns" style="left:303px;top:409px;width:66px;text-align:right">11,689,697</div>
<div class="t ls0 ns" style="left:372px;top:409px;width:58px;text-align:right">15,592,460</div>
<div class="t nv ls0 ns" style="left:214px;top:424px">2</div>
<div class="t ls0 ns" style="left:303px;top:424px;width:66px;text-align:right">3,902,762</div>
<div class="t ls0 ns" style="left:372px;top:424px;width:58px;text-align:right">15,592,460</div>
<div class="t b nv ls0" style="left:214px;top:439px">CTotal</div>
<div class="t b nv ls0" style="left:303px;top:439px;width:66px;text-align:right">15,592,460</div>
<div class="t b nv ls0" style="left:372px;top:439px;width:58px;text-align:right">--</div>

<!-- ============ status bar ============ -->
<div class="a" style="left:0;top:539px;width:211px;height:17px;border-top:1px solid #808080;border-right:1px solid #fff"></div>
<div class="t" style="left:1px;top:543px">Execution complete</div>
<div class="pane" style="left:213px;width:137px"></div>
<div class="t ls0" style="left:216px;top:543px">Execution Time: 00:00:00</div>
<div class="pane" style="left:352px;width:53px"></div>
<div class="t ls0" style="left:355px;top:543px">Rows: 3</div>
<div class="pane" style="left:407px;width:67px"></div>
<div class="t ls0" style="left:411px;top:543px">Columns: 2</div>
<div class="pane" style="left:476px;width:101px"></div>
<svg style="left:478px;top:541px" width="14" height="15" viewBox="0 0 14 15" shape-rendering="crispEdges">
  <rect x="0" y="0" width="14" height="15" fill="#707070"/>
  <rect x="1" y="1" width="12" height="13" fill="#fff"/>
  <rect x="1" y="1" width="12" height="1" fill="#2070C0"/>
  <rect x="2" y="3" width="4" height="4" fill="#C8C8C8"/>
  <rect x="7" y="5" width="5" height="2" fill="#E00000"/>
  <rect x="2" y="10" width="4" height="2" fill="#20B8F0"/>
  <rect x="7" y="10" width="5" height="2" fill="#00C000"/>
  <rect x="6" y="2" width="1" height="12" fill="#B0B0B0"/>
  <rect x="1" y="8" width="12" height="1" fill="#B0B0B0"/>
</svg>
<div class="t" style="left:495px;top:543px">Local Template</div>
<div class="pane" style="left:579px;width:49px"></div>
<div class="t ls0" style="left:582px;top:543px">Standard</div>
<svg style="left:632px;top:543px" width="15" height="13" viewBox="0 0 15 13">
  <path d="M14 1 L2 13 M14 5 L6 13 M14 9 L10 13" stroke="#808080" stroke-width="2"/>
  <path d="M14 2.8 L3.8 13 M14 6.8 L7.8 13 M14 10.8 L11.8 13" stroke="#fff" stroke-width="0.9"/>
</svg>
</body></html>
